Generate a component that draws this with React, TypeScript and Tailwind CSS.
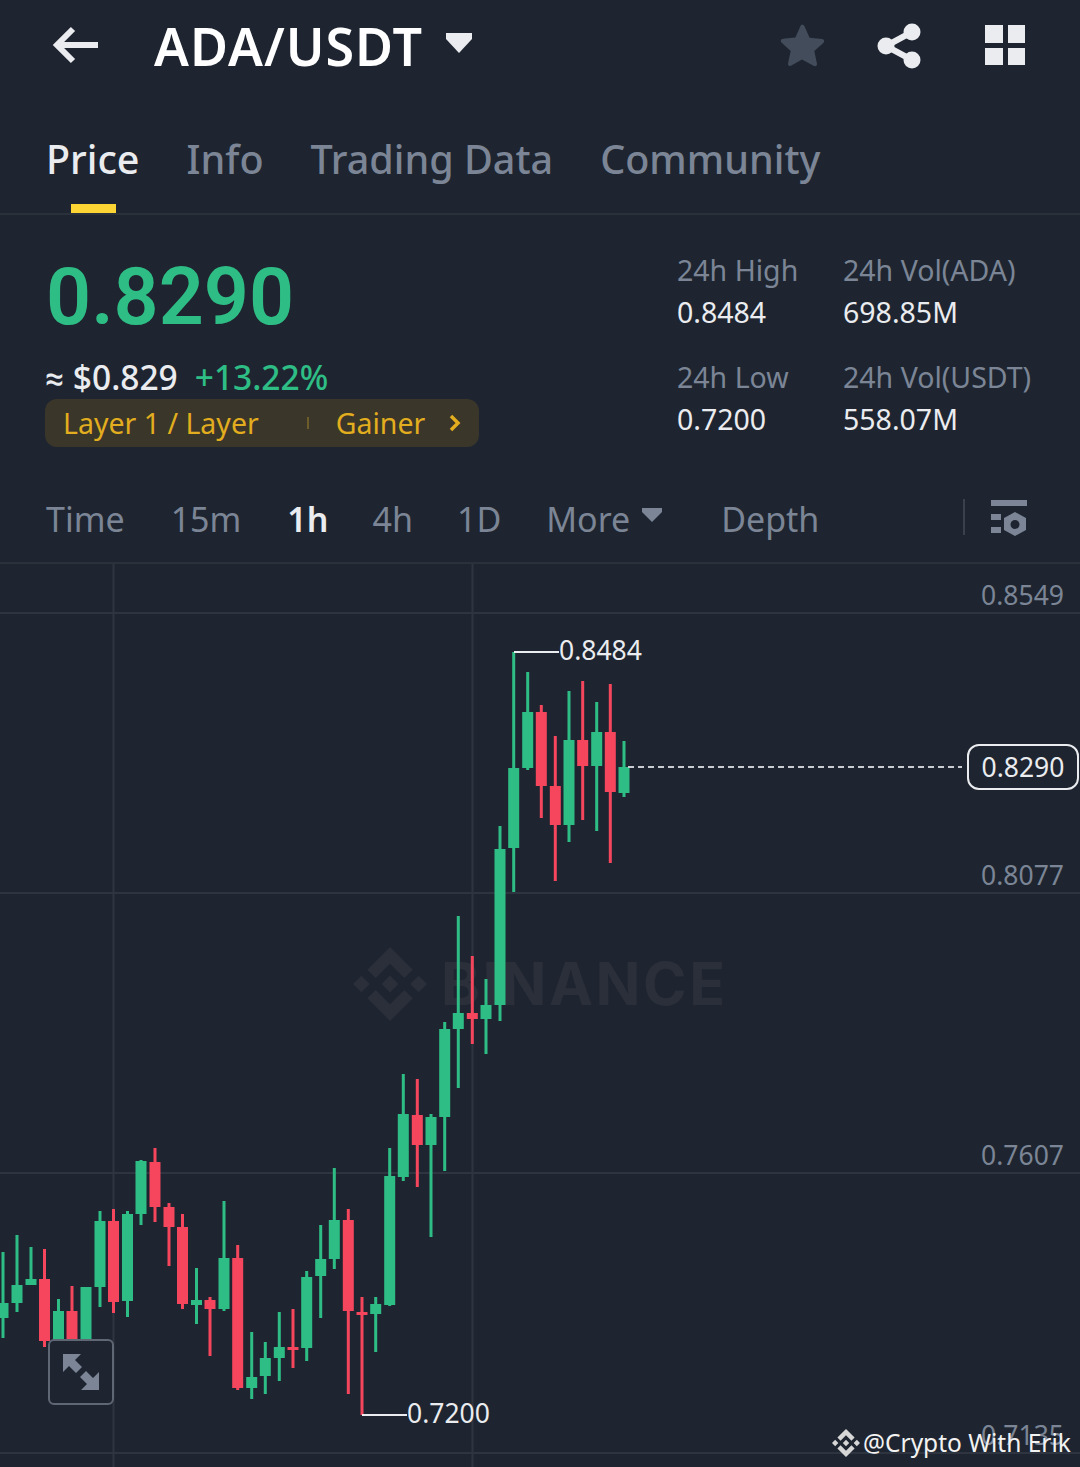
const UI = "font-['Noto_Sans','Roboto',sans-serif]";

// x, wick top, wick bottom, body top, body bottom, up?
const candles: [number, number, number, number, number, boolean][] = [
  [3, 1252, 1338, 1303, 1318, true],
  [17, 1235, 1312, 1285, 1303, true],
  [31, 1247, 1285, 1279, 1285, true],
  [44.5, 1249, 1347, 1279, 1341, false],
  [58.5, 1299, 1345, 1311, 1345, true],
  [72, 1286, 1345, 1311, 1345, false],
  [86, 1287, 1345, 1287, 1345, true],
  [100, 1211, 1307, 1221, 1287, true],
  [113.5, 1209, 1313, 1221, 1302, false],
  [127.5, 1211, 1317, 1214, 1301, true],
  [141, 1160, 1225, 1161, 1214, true],
  [155, 1148, 1222, 1162, 1207, false],
  [169, 1203, 1266, 1207, 1227, false],
  [182.5, 1214, 1309, 1227, 1304, false],
  [196.5, 1268, 1324, 1300, 1305, true],
  [210, 1297, 1356, 1300, 1309, false],
  [224, 1201, 1311, 1258, 1309, true],
  [237.7, 1245, 1390, 1258, 1388, false],
  [251.7, 1332, 1399, 1377, 1388, true],
  [265.3, 1342, 1394, 1358, 1376, true],
  [279.3, 1312, 1381, 1347, 1358, true],
  [293, 1309, 1368, 1347, 1350, false],
  [306.7, 1271, 1361, 1277, 1348, true],
  [320.7, 1225, 1318, 1259, 1276, true],
  [334.3, 1168, 1269, 1220, 1259, true],
  [348.3, 1209, 1394, 1220, 1311, false],
  [362, 1297, 1415, 1312, 1315, false],
  [375.7, 1297, 1352, 1304, 1314, true],
  [389.7, 1148, 1306, 1176, 1305, true],
  [403.3, 1074, 1181, 1114, 1177, true],
  [417.3, 1079, 1187, 1115, 1145, false],
  [431, 1114, 1237, 1117, 1145, true],
  [444.7, 1022, 1171, 1029, 1117, true],
  [458.3, 916, 1088, 1013, 1029, true],
  [472.3, 956, 1044, 1013, 1019, false],
  [486, 979, 1054, 1005, 1019, true],
  [500, 826, 1021, 849, 1005, true],
  [513.7, 652, 892, 768, 848, true],
  [527.7, 672, 770, 712, 768, true],
  [541.3, 705, 818, 712, 786, false],
  [555.3, 736, 881, 786, 825, false],
  [569, 691, 842, 740, 825, true],
  [582.7, 681, 820, 740, 766, false],
  [596.7, 702, 831, 732, 766, true],
  [610.3, 684, 863, 732, 792, false],
  [624, 741, 797, 767, 793, true],
];

const gridY = [613, 893, 1173, 1453];
const gridX = [113.5, 472.5];

function BinanceMark({ className }: { className?: string }) {
  return (
    <svg viewBox="0 0 126.61 126.61" className={className} fill="currentColor">
      <path d="M38.73 53.2l24.59-24.58 24.6 24.6 14.3-14.31L63.32 0 24.42 38.9zM0 63.31l14.3-14.31 14.31 14.31-14.31 14.3zM38.73 73.41l24.59 24.59 24.6-24.6 14.31 14.29-38.9 38.91-38.91-38.88-.02-.02zM98.01 63.31l14.3-14.3 14.31 14.3-14.31 14.31z" />
      <path d="M77.83 63.3L63.32 48.78 52.59 59.51l-1.24 1.23-2.54 2.54 14.51 14.5 14.51-14.47z" />
    </svg>
  );
}

function Header() {
  return (
    <div className="h-[92px] flex flex-row items-center pl-[52px] text-[#eaecef]">
      <svg width="46" height="38" viewBox="0 0 46 38" className="shrink-0 -mt-[2px]" fill="none" stroke="currentColor" strokeWidth="6">
        <path d="M46 19H5" />
        <path d="M21 3L5 19l16 16" />
      </svg>
      <div className="ml-[56px] text-[52px] leading-[60px] font-semibold tracking-[1px] text-white whitespace-nowrap -mt-[1px]">ADA/USDT</div>
      <svg width="28" height="22" viewBox="0 0 28 22" className="ml-[22px] -mt-[6px]" fill="currentColor">
        <path d="M1 1h26v6L14 21 1 7z" />
      </svg>
      <svg width="46" height="46" viewBox="0 0 46 46" className="ml-auto -mt-[1px]" fill="#434c5a">
        <path d="M23 1.5c1.2 0 2 .8 2.6 2l5 11.2 12.3 1.3c2.4.3 3 2.3 1.4 3.9l-9 8.2 2.6 12.1c.5 2.4-1.2 3.7-3.3 2.5L23 36.4l-10.6 6.1c-2.1 1.2-3.8-.1-3.3-2.5l2.6-12.1-9-8.2c-1.6-1.6-1-3.6 1.4-3.9l12.3-1.3 5-11.2c.6-1.2 1.4-2 2.6-2z" />
      </svg>
      <svg width="44" height="46" viewBox="0 0 44 46" className="ml-[52px] -mt-[1px]" fill="currentColor" stroke="currentColor">
        <path d="M9 23L35 9M9 23l26 14" strokeWidth="6" />
        <circle cx="9" cy="23" r="8.5" stroke="none" />
        <circle cx="35" cy="9" r="8.5" stroke="none" />
        <circle cx="35" cy="37" r="8.5" stroke="none" />
      </svg>
      <div className="ml-[64px] mr-[55px] -mt-[2px] grid grid-cols-2 gap-[5px] w-[40px] h-[40px]">
        <div className="bg-[#eaecef]" />
        <div className="bg-[#eaecef]" />
        <div className="bg-[#eaecef]" />
        <div className="bg-[#eaecef]" />
      </div>
    </div>
  );
}

function Tabs() {
  return (
    <div className="h-[123px] border-b-2 border-[#2b313b] flex flex-row pl-[46px] gap-[47px] text-[39.5px] text-[#7b8596]">
      <div className="relative h-full pt-[42px] leading-[50px] font-medium text-[#eaecef]">
        Price
        <div className="absolute left-[25px] bottom-0 w-[45px] h-[9px] bg-[#fcd535]" />
      </div>
      <div className="pt-[42px] leading-[50px] font-medium">Info</div>
      <div className="pt-[42px] leading-[50px] font-medium">Trading Data</div>
      <div className="pt-[42px] leading-[50px] font-medium">Community</div>
    </div>
  );
}

function StatCol({ rows, className }: { rows: [string, string][]; className: string }) {
  return (
    <div className={`${className} flex flex-col gap-[25px] pt-[35px] text-[28.5px] leading-[40px]`}>
      {rows.map(([label, value]) => (
        <div key={label} className="flex flex-col gap-[2px] whitespace-nowrap">
          <div className="text-[#7b8596]">{label}</div>
          <div className="text-[#eaecef]">{value}</div>
        </div>
      ))}
    </div>
  );
}

function Stats() {
  return (
    <div className="h-[263px] flex flex-row">
      <div className="w-[677px] pl-[45px] shrink-0">
        <div className="mt-[43px] pl-[1px] h-[79px] text-[79px] leading-[79px] font-['Roboto',sans-serif] font-semibold text-[#2ebd85]">0.8290</div>
        <div className="mt-[20px] h-[40px] flex flex-row text-[33.5px] leading-[40px] font-medium">
          <span className="text-[#eaecef]">≈ $0.829</span>
          <span className="ml-[17px] text-[#2ebd85]">+13.22%</span>
        </div>
        <div className="mt-[2px] w-[434px] h-[48px] rounded-[12px] bg-[#3a3629] flex flex-row items-center pl-[18px] text-[28.5px] text-[#e2ad1e]">
          <span>Layer 1 / Layer</span>
          <div className="ml-[48px] w-[2px] h-[12px] bg-[#6b5c2a]" />
          <span className="ml-[27px]">Gainer</span>
          <svg width="12" height="18" viewBox="0 0 12 18" className="ml-[24px]" fill="none" stroke="currentColor" strokeWidth="3.5">
            <path d="M2 2l7 7-7 7" />
          </svg>
        </div>
      </div>
      <StatCol className="w-[166px] shrink-0" rows={[["24h High", "0.8484"], ["24h Low", "0.7200"]]} />
      <StatCol className="flex-1" rows={[["24h Vol(ADA)", "698.85M"], ["24h Vol(USDT)", "558.07M"]]} />
    </div>
  );
}

function Intervals() {
  return (
    <div className="h-[86px] border-b-2 border-[#2b313b] flex flex-row items-center pl-[46px] text-[34px] text-[#7b8596]">
      <div className="flex flex-row -mt-[2px]">
        <span>Time</span>
        <span className="ml-[46px]">15m</span>
        <span className="ml-[46px] font-semibold text-[#eaecef]">1h</span>
        <span className="ml-[44px]">4h</span>
        <span className="ml-[44px]">1D</span>
        <span className="ml-[45px]">More</span>
      </div>
      <svg width="20" height="14" viewBox="0 0 20 14" className="ml-[12px] -mt-[10px]" fill="currentColor">
        <path d="M0 0h20v4L10 14 0 4z" />
      </svg>
      <span className="ml-[59px] -mt-[2px]">Depth</span>
      <div className="ml-auto w-[2px] h-[36px] bg-[#3a404c] -mt-[6px]" />
      <svg width="38" height="38" viewBox="0 0 38 38" className="ml-[25px] mr-[52px] -mt-[5px]" fill="currentColor">
        <path d="M1 1h36v6H1zM1 15h10v6H1zM1 28h10v6H1z" />
        <path fillRule="evenodd" d="M25 13l11 6v12l-11 6-11-6V19zm0 8a4.5 4.5 0 1 0 0 9 4.5 4.5 0 0 0 0-9z" />
      </svg>
    </div>
  );
}

function PriceLabel({ value, className }: { value: string; className: string }) {
  return <div className={`absolute right-[16px] text-[26.5px] leading-[36px] text-[#7b8596] ${className}`}>{value}</div>;
}

function Chart() {
  return (
    <div className="relative flex-1 overflow-hidden">
      <div className="absolute left-[353px] top-[383px] flex flex-row items-center text-[#2b2f3a]">
        <BinanceMark className="w-[74px] h-[74px]" />
        <span className="ml-[14px] text-[59px] leading-[74px] font-['Inter',sans-serif] font-bold tracking-[2.5px]">BINANCE</span>
      </div>
      <svg viewBox="0 564 1080 903" width="1080" height="903" className="absolute inset-0">
        {gridY.map((y) => (
          <line key={y} x1="0" x2="1080" y1={y} y2={y} stroke="#2f3540" strokeWidth="2" />
        ))}
        {gridX.map((x) => (
          <line key={x} x1={x} x2={x} y1="564" y2="1467" stroke="#2f3540" strokeWidth="2" />
        ))}
        {candles.map(([x, wt, wb, bt, bb, up]) => (
          <g key={x} fill={up ? "#2ebd85" : "#f6465d"}>
            <rect x={x - 1.5} y={wt} width="3" height={wb - wt} />
            <rect x={x - 5.5} y={bt} width="11" height={bb - bt} />
          </g>
        ))}
        <path d="M514 652h45M362 1415h45" stroke="#eaecef" strokeWidth="2" fill="none" />
        <line x1="628" x2="962" y1="767" y2="767" stroke="#c9ccd1" strokeWidth="2" strokeDasharray="6 4" />
      </svg>
      <PriceLabel value="0.8549" className="top-[13px]" />
      <PriceLabel value="0.8077" className="top-[293px]" />
      <PriceLabel value="0.7607" className="top-[573px]" />
      <PriceLabel value="0.7135" className="top-[853px]" />
      <div className="absolute left-[559px] top-[68px] text-[26.5px] leading-[36px] text-[#eaecef]">0.8484</div>
      <div className="absolute left-[407px] top-[831px] text-[26.5px] leading-[36px] text-[#eaecef]">0.7200</div>
      <div className="absolute left-[967px] top-[180px] w-[112px] h-[46px] rounded-[12px] border-2 border-[#eaecef] bg-[#1e2530] flex items-center justify-center pt-[2px] text-[26.5px] text-[#eaecef]">0.8290</div>
      <div className="absolute left-[48px] top-[775px] w-[66px] h-[66px] rounded-[6px] border-2 border-[#5f6774] bg-[#1e2530] flex items-center justify-center">
        <svg width="38" height="38" viewBox="0 0 38 38" fill="#7b8596">
          <path d="M1 1h18l-6 6 7 7-6 6-7-7-6 6zM37 37H19l6-6-7-7 6-6 7 7 6-6z" />
        </svg>
      </div>
      <div className="absolute left-[832px] top-[861px] flex flex-row items-center text-[#f2f2f2]">
        <BinanceMark className="w-[28px] h-[28px] text-[#d6d6d6]" />
        <span className="ml-[3px] text-[24.5px] leading-[36px] whitespace-nowrap">@Crypto With Erik</span>
      </div>
    </div>
  );
}

export default function App() {
  return (
    <div className={`w-[1080px] h-[1467px] bg-[#1e2530] flex flex-col overflow-hidden ${UI}`}>
      <Header />
      <Tabs />
      <Stats />
      <Intervals />
      <Chart />
    </div>
  );
}
